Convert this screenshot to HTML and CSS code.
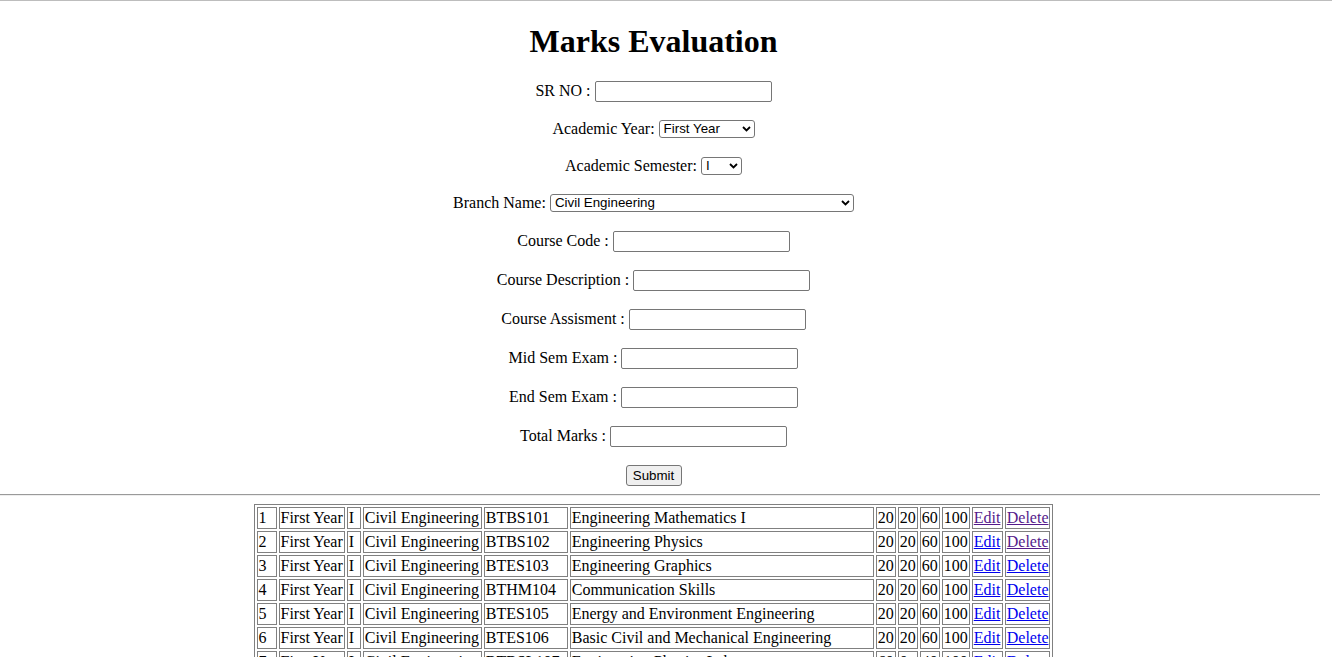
FILE: index.html
```html
<!DOCTYPE html>
<html lang="en">
<head>
<meta charset="utf-8">
<title>Marks Evaluation</title>
<link rel="stylesheet" href="styles.css">
</head>
<body>
<div class="topline"></div>
<main class="page">
  <h1 class="title">Marks Evaluation</h1>
  <form class="form">
    <div class="row"><label>SR NO :</label><input class="field" type="text"></div>
    <div class="row row-select"><label>Academic Year:</label>
      <span class="select-wrap"><select class="sel sel-year"><option>First Year</option><option>Second Year</option><option>Third Year</option><option>Final Year</option></select><svg class="chev" viewBox="0 0 9 6" width="9" height="6"><polyline points="1,1 4.5,4.5 8,1"/></svg></span></div>
    <div class="row row-select"><label>Academic Semester:</label>
      <span class="select-wrap"><select class="sel sel-sem"><option>I</option><option>II</option></select><svg class="chev" viewBox="0 0 9 6" width="9" height="6"><polyline points="1,1 4.5,4.5 8,1"/></svg></span></div>
    <div class="row row-select"><label>Branch Name:</label>
      <span class="select-wrap"><select class="sel sel-branch"><option>Civil Engineering</option><option>Computer Engineering</option><option>Mechanical Engineering</option><option>Electrical Engineering</option></select><svg class="chev" viewBox="0 0 9 6" width="9" height="6"><polyline points="1,1 4.5,4.5 8,1"/></svg></span></div>
    <div class="row"><label>Course Code :</label><input class="field" type="text"></div>
    <div class="row"><label>Course Description :</label><input class="field" type="text"></div>
    <div class="row"><label>Course Assisment :</label><input class="field" type="text"></div>
    <div class="row"><label>Mid Sem Exam :</label><input class="field" type="text"></div>
    <div class="row"><label>End Sem Exam :</label><input class="field" type="text"></div>
    <div class="row"><label>Total Marks :</label><input class="field" type="text"></div>
    <div class="row"><button class="btn" type="button">Submit</button></div>
  </form>
</main>
<hr class="divider">
<div class="table-wrap">
<table class="marks">
  <tr><td>1</td><td>First Year</td><td>I</td><td>Civil Engineering</td><td>BTBS101</td><td>Engineering Mathematics I</td><td>20</td><td>20</td><td>60</td><td>100</td><td><a class="visited" href="#">Edit</a></td><td><a class="visited" href="#">Delete</a></td></tr>
  <tr><td>2</td><td>First Year</td><td>I</td><td>Civil Engineering</td><td>BTBS102</td><td>Engineering Physics</td><td>20</td><td>20</td><td>60</td><td>100</td><td><a href="#">Edit</a></td><td><a class="visited" href="#">Delete</a></td></tr>
  <tr><td>3</td><td>First Year</td><td>I</td><td>Civil Engineering</td><td>BTES103</td><td>Engineering Graphics</td><td>20</td><td>20</td><td>60</td><td>100</td><td><a href="#">Edit</a></td><td><a href="#">Delete</a></td></tr>
  <tr><td>4</td><td>First Year</td><td>I</td><td>Civil Engineering</td><td>BTHM104</td><td>Communication Skills</td><td>20</td><td>20</td><td>60</td><td>100</td><td><a href="#">Edit</a></td><td><a href="#">Delete</a></td></tr>
  <tr><td>5</td><td>First Year</td><td>I</td><td>Civil Engineering</td><td>BTES105</td><td>Energy and Environment Engineering</td><td>20</td><td>20</td><td>60</td><td>100</td><td><a href="#">Edit</a></td><td><a href="#">Delete</a></td></tr>
  <tr><td>6</td><td>First Year</td><td>I</td><td>Civil Engineering</td><td>BTES106</td><td>Basic Civil and Mechanical Engineering</td><td>20</td><td>20</td><td>60</td><td>100</td><td><a href="#">Edit</a></td><td><a href="#">Delete</a></td></tr>
  <tr><td>7</td><td>First Year</td><td>I</td><td>Civil Engineering</td><td>BTBSL107</td><td>Engineering Physics Lab</td><td>60</td><td>0</td><td>40</td><td>100</td><td><a href="#">Edit</a></td><td><a href="#">Delete</a></td></tr>
  <tr><td>8</td><td>First Year</td><td>I</td><td>Civil Engineering</td><td>BTESL108</td><td>Engineering Graphics Lab</td><td>60</td><td>0</td><td>40</td><td>100</td><td><a href="#">Edit</a></td><td><a href="#">Delete</a></td></tr>
  <tr><td>9</td><td>First Year</td><td>I</td><td>Civil Engineering</td><td>BTESL109</td><td>Basic Civil and Mechanical Engineering Lab</td><td>60</td><td>0</td><td>40</td><td>100</td><td><a href="#">Edit</a></td><td><a href="#">Delete</a></td></tr>
  <tr><td>10</td><td>First Year</td><td>I</td><td>Civil Engineering</td><td>BTES110</td><td>Communication Skills Lab</td><td>60</td><td>0</td><td>40</td><td>100</td><td><a href="#">Edit</a></td><td><a href="#">Delete</a></td></tr>
</table>
</div>
</body>
</html>
```

FILE: styles.css
```css
html {
  overflow: hidden;
}

body {
  margin: 0;
  font-family: "Liberation Serif", "Times New Roman", serif;
  font-size: 16px;
  color: #000;
  background: #fff;
}

.topline {
  height: 1px;
  background: #bdbdbd;
}

.page {
  width: 1307px;
  text-align: center;
}

.title {
  margin: 22px 0 0;
  font-size: 32px;
  line-height: 37px;
  font-weight: bold;
}

.form {
  display: flex;
  flex-direction: column;
  gap: 16px;
  padding-top: 19.5px;
}

.row {
  display: flex;
  justify-content: center;
  align-items: center;
  gap: 4px;
  height: 23px;
}

.row-select {
  height: 21px;
}

.field {
  width: 177px;
  height: 21px;
  box-sizing: border-box;
  margin: 0;
  padding: 1px 2px;
  border: 1px solid #767676;
  border-radius: 2px;
  background: #fff;
  font: 13.33px "Liberation Sans", Arial, sans-serif;
}

.select-wrap {
  position: relative;
  display: inline-block;
  height: 18px;
}

.sel {
  -webkit-appearance: none;
  appearance: none;
  display: block;
  height: 18px;
  box-sizing: border-box;
  margin: 0;
  padding: 0 0 0 4px;
  border: 1px solid #767676;
  border-radius: 3px;
  background: #fff;
  color: #000;
  font: 13.33px "Liberation Sans", Arial, sans-serif;
  line-height: 16px;
}

.sel-year { width: 96px; }
.sel-sem { width: 41px; }
.sel-branch { width: 304px; }

.chev {
  position: absolute;
  right: 4px;
  top: 6px;
  fill: none;
  stroke: #000;
  stroke-width: 1.8;
  pointer-events: none;
}

.btn {
  width: 56px;
  height: 21px;
  margin: 0;
  padding: 0;
  border: 1px solid #767676;
  border-radius: 3px;
  background: #efefef;
  color: #000;
  font: 13.33px "Liberation Sans", Arial, sans-serif;
}

.divider {
  width: 1320px;
  height: 0;
  margin: 7px 0 0;
  border: 0;
  border-top: 1px solid #9a9a9a;
  border-bottom: 1px solid #eeeeee;
}

.table-wrap {
  width: 1307px;
  display: flex;
  justify-content: center;
  margin-top: 8.5px;
}

.marks {
  border: 1px solid #808080;
  border-spacing: 2px;
}

.marks td {
  border: 1px solid #808080;
  padding: 1px;
  line-height: 18px;
  white-space: nowrap;
  text-align: left;
}

.marks td:nth-child(1) { width: 16px; }
.marks td:nth-child(2) { width: 62px; }
.marks td:nth-child(3) { width: 10px; }
.marks td:nth-child(4) { width: 115px; }
.marks td:nth-child(5) { width: 80px; }
.marks td:nth-child(6) { width: 300px; }
.marks td:nth-child(7) { width: 16px; }
.marks td:nth-child(8) { width: 16px; }
.marks td:nth-child(9) { width: 16px; }
.marks td:nth-child(10) { width: 23px; }
.marks td:nth-child(11) { width: 27px; }
.marks td:nth-child(12) { width: 40px; }

.marks a {
  color: #0000ee;
  text-decoration: underline;
}

.marks a.visited {
  color: #551a8b;
}
```
